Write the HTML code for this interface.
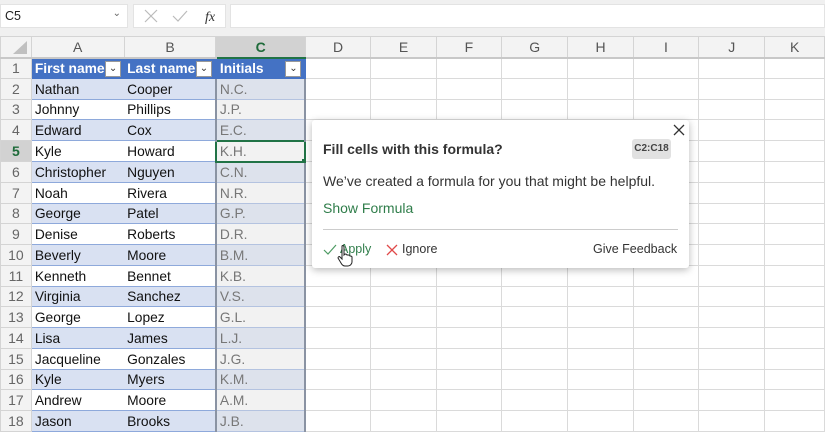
<!DOCTYPE html>
<html><head><meta charset="utf-8"><style>
*{margin:0;padding:0;box-sizing:border-box}
body{width:825px;height:424px;overflow:hidden;background:#fff;font-family:"Liberation Sans",sans-serif;position:relative}
.top{position:absolute;left:0;top:0;width:825px;height:36px;background:#f0f0f0}
.box{position:absolute;top:4px;height:24px;background:#fff;border:1px solid #e3e3e3}
table{position:absolute;left:0;top:36px;border-collapse:collapse;table-layout:fixed}
td{height:20.75px;border:1px solid #dadada;font-size:13.8px;padding:0 3px;white-space:nowrap;overflow:hidden;color:#111;vertical-align:bottom;line-height:19px}
tr.h td{height:21px;background:#f3f3f3;color:#555;text-align:center;font-size:14px;border-color:#d4d4d4;border-bottom:2px solid #c8c8c8}
td.rh{background:#f3f3f3;color:#666;text-align:center;font-size:14px;border-color:#d4d4d4;padding:0}
tr.b td.t{background:#d9e1f2}
td.t{border-left:none;border-right:none;border-top:1px solid #8ea9db;border-bottom:1px solid #8ea9db}
tr.b td.c{background:#dde2ec}
td.c{background:#f2f2f2;color:#777;border-left:2px solid #8a93a3;border-right:2px solid #8a93a3;border-top:1px solid #b4c3e0;border-bottom:1px solid #b4c3e0}
tr.hd td.t,tr.hd td.c{background:#4472c4;color:#fff;font-weight:bold;position:relative;border-color:#4472c4}
.dd{position:absolute;right:3px;top:2px;width:16px;height:16px;background:#fff;border:1px solid #999;font-size:10px;color:#333;text-align:center;line-height:13px;font-weight:normal}
.pop{position:absolute;left:312px;top:120px;width:377px;height:148px;background:#fff;box-shadow:0 2px 8px rgba(0,0,0,.28);border-radius:3px;color:#333}
</style></head><body>
<div class="top"></div>
<div class="box" style="left:0;width:128px"><span style="position:absolute;left:4px;top:4px;font-size:12.5px;color:#222">C5</span><span style="position:absolute;right:6px;top:3px;font-size:10px;color:#666">⌄</span></div>
<div class="box" style="left:133px;width:93px">
<svg width="93" height="22" style="position:absolute;left:0;top:0"><path d="M11 5l12 12M23 5L11 17" stroke="#bbb" stroke-width="1.2" fill="none"/><path d="M39 11l5 5 9-10" stroke="#bbb" stroke-width="1.2" fill="none"/><text x="71" y="16" font-family="Liberation Serif" font-style="italic" font-size="14" fill="#333">fx</text></svg></div>
<div class="box" style="left:230px;width:595px"></div>
<table>
<colgroup><col style="width:31px"><col style="width:93px"><col style="width:92px"><col style="width:90px"><col style="width:66px"><col style="width:66px"><col style="width:66px"><col style="width:67px"><col style="width:66px"><col style="width:66px"><col style="width:67px"><col style="width:60px"></colgroup>
<tr class="h"><td style="position:relative"><svg width="20" height="16" style="position:absolute;right:2px;bottom:2px"><path d="M18 2L18 15 4 15Z" fill="#c0c0c0"/></svg></td><td>A</td><td>B</td><td style="background:#d2d2d2;color:#1e6b3a;font-weight:bold;border-bottom:2px solid #217346">C</td><td>D</td><td>E</td><td>F</td><td>G</td><td>H</td><td>I</td><td>J</td><td>K</td></tr>
<tr class="hd"><td class="rh">1</td><td class="t">First name<span class="dd">⌄</span></td><td class="t">Last name<span class="dd">⌄</span></td><td class="c">Initials<span class="dd">⌄</span></td><td></td><td></td><td></td><td></td><td></td><td></td><td></td><td></td></tr>
<tr class="b"><td class="rh">2</td><td class="t">Nathan</td><td class="t">Cooper</td><td class="c">N.C.</td><td></td><td></td><td></td><td></td><td></td><td></td><td></td><td></td></tr>
<tr><td class="rh">3</td><td class="t">Johnny</td><td class="t">Phillips</td><td class="c">J.P.</td><td></td><td></td><td></td><td></td><td></td><td></td><td></td><td></td></tr>
<tr class="b"><td class="rh">4</td><td class="t">Edward</td><td class="t">Cox</td><td class="c">E.C.</td><td></td><td></td><td></td><td></td><td></td><td></td><td></td><td></td></tr>
<tr><td class="rh" style="color:#1e6b3a;font-weight:bold;background:#d2d2d2">5</td><td class="t">Kyle</td><td class="t">Howard</td><td class="c" style="border:2px solid #217346;position:relative">K.H.<span style="position:absolute;right:-3px;bottom:-3px;width:5px;height:5px;background:#217346"></span></td><td></td><td></td><td></td><td></td><td></td><td></td><td></td><td></td></tr>
<tr class="b"><td class="rh">6</td><td class="t">Christopher</td><td class="t">Nguyen</td><td class="c">C.N.</td><td></td><td></td><td></td><td></td><td></td><td></td><td></td><td></td></tr>
<tr><td class="rh">7</td><td class="t">Noah</td><td class="t">Rivera</td><td class="c">N.R.</td><td></td><td></td><td></td><td></td><td></td><td></td><td></td><td></td></tr>
<tr class="b"><td class="rh">8</td><td class="t">George</td><td class="t">Patel</td><td class="c">G.P.</td><td></td><td></td><td></td><td></td><td></td><td></td><td></td><td></td></tr>
<tr><td class="rh">9</td><td class="t">Denise</td><td class="t">Roberts</td><td class="c">D.R.</td><td></td><td></td><td></td><td></td><td></td><td></td><td></td><td></td></tr>
<tr class="b"><td class="rh">10</td><td class="t">Beverly</td><td class="t">Moore</td><td class="c">B.M.</td><td></td><td></td><td></td><td></td><td></td><td></td><td></td><td></td></tr>
<tr><td class="rh">11</td><td class="t">Kenneth</td><td class="t">Bennet</td><td class="c">K.B.</td><td></td><td></td><td></td><td></td><td></td><td></td><td></td><td></td></tr>
<tr class="b"><td class="rh">12</td><td class="t">Virginia</td><td class="t">Sanchez</td><td class="c">V.S.</td><td></td><td></td><td></td><td></td><td></td><td></td><td></td><td></td></tr>
<tr><td class="rh">13</td><td class="t">George</td><td class="t">Lopez</td><td class="c">G.L.</td><td></td><td></td><td></td><td></td><td></td><td></td><td></td><td></td></tr>
<tr class="b"><td class="rh">14</td><td class="t">Lisa</td><td class="t">James</td><td class="c">L.J.</td><td></td><td></td><td></td><td></td><td></td><td></td><td></td><td></td></tr>
<tr><td class="rh">15</td><td class="t">Jacqueline</td><td class="t">Gonzales</td><td class="c">J.G.</td><td></td><td></td><td></td><td></td><td></td><td></td><td></td><td></td></tr>
<tr class="b"><td class="rh">16</td><td class="t">Kyle</td><td class="t">Myers</td><td class="c">K.M.</td><td></td><td></td><td></td><td></td><td></td><td></td><td></td><td></td></tr>
<tr><td class="rh">17</td><td class="t">Andrew</td><td class="t">Moore</td><td class="c">A.M.</td><td></td><td></td><td></td><td></td><td></td><td></td><td></td><td></td></tr>
<tr class="b"><td class="rh">18</td><td class="t">Jason</td><td class="t">Brooks</td><td class="c">J.B.</td><td></td><td></td><td></td><td></td><td></td><td></td><td></td><td></td></tr>
</table>
<div class="pop">
<svg width="12" height="12" style="position:absolute;left:361px;top:4px"><path d="M1 1l10 10M11 1L1 11" stroke="#333" stroke-width="1.3"/></svg>
<div style="position:absolute;left:11px;top:21px;font-size:14px;font-weight:bold;color:#333">Fill cells with this formula?</div>
<div style="position:absolute;left:320px;top:19px;width:39px;height:20px;background:#e1e1e1;border-radius:3px;font-size:10px;font-weight:bold;color:#444;text-align:center;line-height:20px">C2:C18</div>
<div style="position:absolute;left:11px;top:53px;font-size:14px;color:#333">We’ve created a formula for you that might be helpful.</div>
<div style="position:absolute;left:11px;top:80px;font-size:14px;color:#2f7d4a">Show Formula</div>
<div style="position:absolute;left:11px;top:109px;width:355px;height:1px;background:#ccc"></div>
<svg width="14" height="12" style="position:absolute;left:11px;top:124px"><path d="M1 6l4 4 8-9" stroke="#4d9b63" stroke-width="1.2" fill="none"/></svg>
<div style="position:absolute;left:28px;top:122px;font-size:12.5px;color:#2f7d4a">Apply</div>
<svg width="12" height="12" style="position:absolute;left:74px;top:124px"><path d="M1 1l10 10M11 1L1 11" stroke="#e04a4a" stroke-width="1.3"/></svg>
<div style="position:absolute;left:90px;top:122px;font-size:12.5px;color:#333">Ignore</div>
<div style="position:absolute;left:281px;top:122px;font-size:12.5px;color:#333">Give Feedback</div>
<svg width="18" height="24" style="position:absolute;left:24px;top:124px"><path d="M6 2c1-1 2 0 2 1v8l1-1c1 0 2 0 2 1l1 0c1 0 2 0 2 1c1 0 2 0 2 1v5c0 2-2 4-4 4h-3c-2 0-3-1-4-3l-3-5c0-1 1-2 2-1l2 2V3z" fill="#fff" stroke="#222" stroke-width="1"/></svg>
</div>
</body></html>
